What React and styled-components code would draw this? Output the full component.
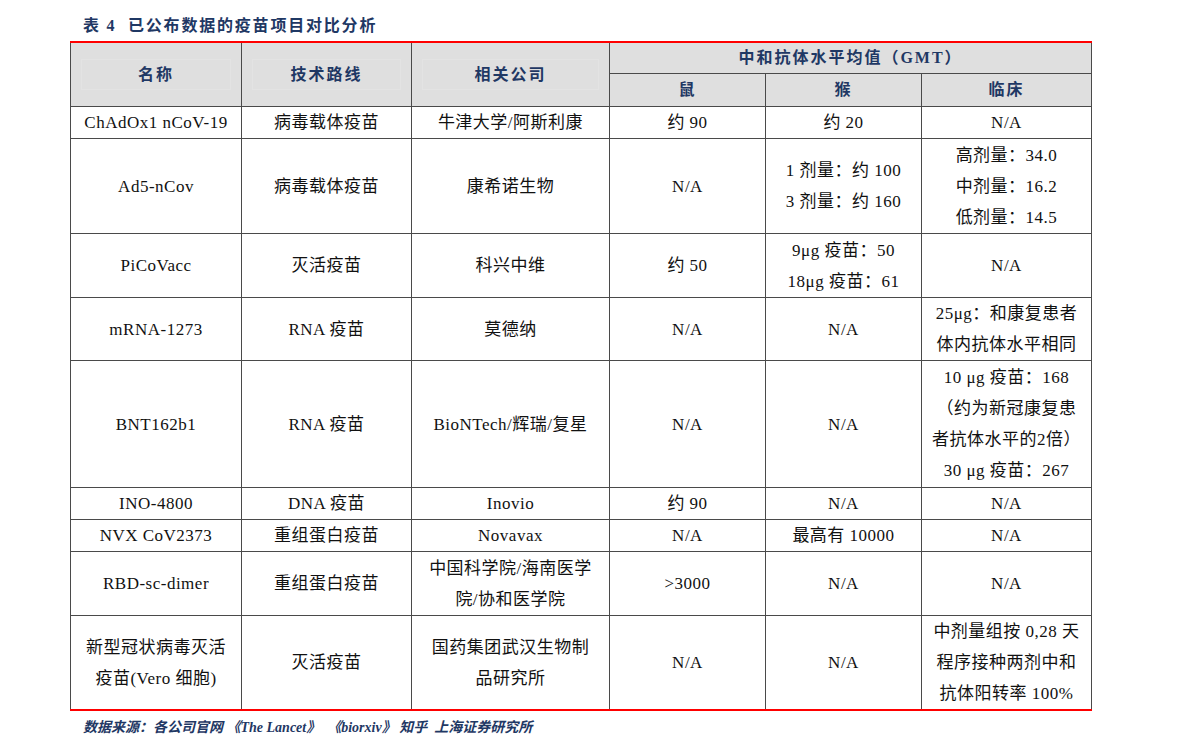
import React from 'react';
import styled, { createGlobalStyle } from 'styled-components';

const GlobalStyle = createGlobalStyle`
  html, body {
    margin: 0;
    padding: 0;
    background: #ffffff;
  }
  body {
    font-family: "Liberation Serif", "Noto Sans CJK SC", serif;
  }
`;

const rows = [
    { h: 30, cells: [['ChAdOx1 nCoV-19'], ['病毒载体疫苗'], ['牛津大学/阿斯利康'], ['约 90'], ['约 20'], ['N/A']] },
    { h: 95, cells: [['Ad5-nCov'], ['病毒载体疫苗'], ['康希诺生物'], ['N/A'], ['1 剂量：约 100', '3 剂量：约 160'], ['高剂量：34.0', '中剂量：16.2', '低剂量：14.5']] },
    { h: 64, cells: [['PiCoVacc'], ['灭活疫苗'], ['科兴中维'], ['约 50'], ['9μg 疫苗：50', '18μg 疫苗：61'], ['N/A']] },
    { h: 63, cells: [['mRNA-1273'], ['RNA 疫苗'], ['莫德纳'], ['N/A'], ['N/A'], ['25μg：和康复患者', '体内抗体水平相同']] },
    { h: 127, cells: [['BNT162b1'], ['RNA 疫苗'], ['BioNTech/辉瑞/复星'], ['N/A'], ['N/A'], ['10 μg 疫苗：168', '（约为新冠康复患', '者抗体水平的2倍）', '30 μg 疫苗：267']] },
    { h: 31, cells: [['INO-4800'], ['DNA 疫苗'], ['Inovio'], ['约 90'], ['N/A'], ['N/A']] },
    { h: 31, cells: [['NVX CoV2373'], ['重组蛋白疫苗'], ['Novavax'], ['N/A'], ['最高有 10000'], ['N/A']] },
    { h: 64, cells: [['RBD-sc-dimer'], ['重组蛋白疫苗'], ['中国科学院/海南医学', '院/协和医学院'], ['>3000'], ['N/A'], ['N/A']] },
    { h: 94, cells: [['新型冠状病毒灭活', '疫苗(Vero 细胞)'], ['灭活疫苗'], ['国药集团武汉生物制', '品研究所'], ['N/A'], ['N/A'], ['中剂量组按 0,28 天', '程序接种两剂中和', '抗体阳转率 100%']] },
];

const colWidths = [171, 170, 198, 156, 156, 170];

const Page = styled.div`
  padding-left: 70px;
  width: 1021px;
`;

const Title = styled.div`
  height: 41px;
  box-sizing: border-box;
  padding: 16px 0 0 13px;
  line-height: 20px;
  font-size: 16px;
  font-weight: bold;
  color: #1f3864;
  letter-spacing: 1.8px;
  white-space: pre;
`;

const Table = styled.table`
  width: 1021px;
  border-collapse: collapse;
  table-layout: fixed;
  border-top: 2px solid #ff0000;
  border-bottom: 2px solid #ff0000;
`;

// header cells carry a faint inner frame, as in the original sheet
const HeadCell = styled.th`
  position: relative;
  background: #dfdfdf;
  color: #1f3864;
  font-size: 16px;
  font-weight: bold;
  letter-spacing: 2px;
  line-height: 20px;
  text-align: center;
  border: 1px solid #4a4a4a;
  padding: 0;
  height: ${(p) => p.$h}px;

  &::before {
    content: '';
    display: ${(p) => (p.$frame ? 'block' : 'none')};
    position: absolute;
    left: 10px;
    right: 10px;
    top: ${(p) => p.$frame || 0}px;
    bottom: ${(p) => p.$frame || 0}px;
    border: 1px solid #e3e3e3;
    pointer-events: none;
  }
`;

const Row = styled.tr`
  height: ${(p) => p.$h}px;
`;

const Cell = styled.td`
  border: 1px solid #4a4a4a;
  padding: 0;
  text-align: center;
  vertical-align: middle;
  font-size: 17px;
  line-height: 31px;
  letter-spacing: 0.5px;
  color: #111111;
`;

const Line = styled.div`
  white-space: nowrap;
`;

const Source = styled.div`
  padding: 7px 0 0 13px;
  line-height: 20px;
  font-size: 14px;
  font-weight: bold;
  font-style: italic;
  color: #1f3864;
  white-space: pre;
`;

export default function App() {
    return (
        <>
            <GlobalStyle />
            <Page>
                <Title>{'表 4  已公布数据的疫苗项目对比分析'}</Title>
                <Table>
                    <colgroup>
                        {colWidths.map((w, i) => (
                            <col key={i} style={{ width: w }} />
                        ))}
                    </colgroup>
                    <thead>
                        <tr>
                            <HeadCell rowSpan={2} $h={30} $frame={16}>名称</HeadCell>
                            <HeadCell rowSpan={2} $h={30} $frame={16}>技术路线</HeadCell>
                            <HeadCell rowSpan={2} $h={30} $frame={16}>相关公司</HeadCell>
                            <HeadCell colSpan={3} $h={30}>中和抗体水平均值（GMT）</HeadCell>
                        </tr>
                        <tr>
                            <HeadCell $h={32}>鼠</HeadCell>
                            <HeadCell $h={32}>猴</HeadCell>
                            <HeadCell $h={32}>临床</HeadCell>
                        </tr>
                    </thead>
                    <tbody>
                        {rows.map((row, r) => (
                            <Row key={r} $h={row.h}>
                                {row.cells.map((lines, c) => (
                                    <Cell key={c}>
                                        {lines.map((t, k) => (
                                            <Line key={k}>{t}</Line>
                                        ))}
                                    </Cell>
                                ))}
                            </Row>
                        ))}
                    </tbody>
                </Table>
                <Source>{'数据来源：各公司官网 《The Lancet》  《biorxiv》 知乎  上海证券研究所'}</Source>
            </Page>
        </>
    );
}
